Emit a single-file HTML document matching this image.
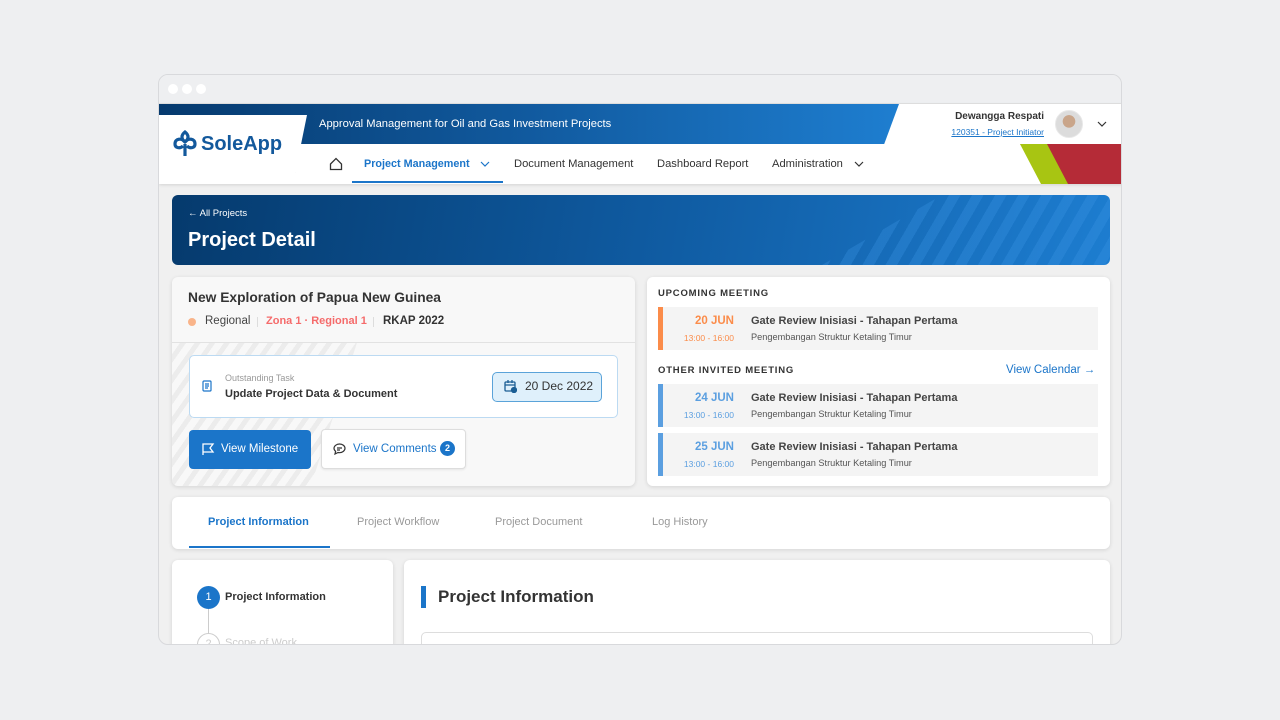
<!DOCTYPE html>
<html><head><meta charset="utf-8"><style>
*{box-sizing:border-box;margin:0;padding:0}
body{width:1280px;height:720px;background:#eeeff1;font-family:"Liberation Sans",sans-serif;position:relative;overflow:hidden;color:#333}
.abs{position:absolute}
.win{left:158px;top:74px;width:964px;height:571px;border:1px solid #d8d9dc;border-radius:10px;background:#f0f0f0;overflow:hidden}
.card{background:#fff;border-radius:6px;box-shadow:0 1px 4px rgba(0,0,0,.12)}
.nav{font-size:11.2px;color:#333}
</style></head><body>
<div class="abs win">
 <div class="abs" style="left:0;top:0;width:964px;height:29px;background:#eeeff1;border-bottom:1px solid #e2e2e2"></div>
 <div class="abs" style="left:9px;top:9px;width:10px;height:10px;border-radius:5px;background:#fff"></div>
 <div class="abs" style="left:23px;top:9px;width:10px;height:10px;border-radius:5px;background:#fff"></div>
 <div class="abs" style="left:37px;top:9px;width:10px;height:10px;border-radius:5px;background:#fff"></div>
 <!-- header -->
 <div class="abs" style="left:0;top:29px;width:964px;height:80px;background:#fff;box-shadow:0 1px 3px rgba(0,0,0,.12)"></div>
 <div class="abs" style="left:0;top:29px;width:740px;height:40px;background:linear-gradient(90deg,#063a6e,#115a9f 50%,#1e7ed0);clip-path:polygon(0 0,100% 0,98% 100%,0 100%);border-radius:0 0 6px 0"></div>
 <div class="abs" style="left:160px;top:43px;color:#fff;font-size:11.2px">Approval Management for Oil and Gas Investment Projects</div>
 <div class="abs" style="left:0;top:40px;width:148px;height:58px;background:#fff;clip-path:polygon(0 0,100% 0,92% 100%,0 100%);box-shadow:0 2px 4px rgba(0,0,0,.1)"></div>
 <svg class="abs" style="left:13px;top:55px" width="26" height="28" viewBox="0 0 26 28" fill="none" stroke="#13599c" stroke-width="3.2"><path d="M13 2c-4 3-4 7 0 10 4-3 4-7 0-10z"/><path d="M13 12c-3-4-10-4-10 2 0 4 5 5 8 2M13 12c3-4 10-4 10 2 0 4-5 5-8 2M13 14v12"/></svg>
 <div class="abs" style="left:42px;top:58px;font-size:20px;font-weight:bold;color:#13599c">SoleApp</div>
 <svg class="abs" style="left:170px;top:82px" width="14" height="14" viewBox="0 0 14 14" fill="none" stroke="#333" stroke-width="1.3"><path d="M1.5 7 7 1.5 12.5 7v5.5h-11z"/></svg>
 <div class="abs nav" style="left:205px;top:83px;font-weight:bold;color:#1b75c9;font-size:10.8px">Project Management</div>
 <svg class="abs" style="left:321px;top:86px" width="10" height="6" fill="none" stroke="#1b75c9" stroke-width="1.2"><path d="M1 1l4 4 4-4"/></svg>
 <div class="abs" style="left:193px;top:106px;width:151px;height:2px;background:#1b75c9"></div>
 <div class="abs nav" style="left:355px;top:83px">Document Management</div>
 <div class="abs nav" style="left:498px;top:83px">Dashboard Report</div>
 <div class="abs nav" style="left:613px;top:83px">Administration</div>
 <svg class="abs" style="left:695px;top:86px" width="10" height="6" fill="none" stroke="#333" stroke-width="1.2"><path d="M1 1l4 4 4-4"/></svg>
 <div class="abs" style="left:861px;top:69px;width:103px;height:40px;background:#b52b37;clip-path:polygon(0 0,100% 0,100% 100%,32% 100%)"></div>
 <div class="abs" style="left:861px;top:69px;width:60px;height:40px;background:#a8c512;clip-path:polygon(0 0,45% 0,80% 100%,35% 100%)"></div>
 <div class="abs" style="left:770px;top:36px;width:115px;text-align:right;font-size:10px;font-weight:bold;color:#333">Dewangga Respati</div>
 <div class="abs" style="left:770px;top:52px;width:115px;text-align:right;font-size:8.5px;color:#1b75c9;text-decoration:underline">120351 - Project Initiator</div>
 <div class="abs" style="left:896px;top:35px;width:28px;height:28px;border-radius:14px;background:radial-gradient(circle at 50% 40%,#c9a58a 30%,#dcdcdc 32%);border:1px solid #e8e8e8"></div>
 <svg class="abs" style="left:938px;top:46px" width="10" height="6" fill="none" stroke="#333" stroke-width="1.2"><path d="M1 1l4 4 4-4"/></svg>
 <!-- banner -->
 <div class="abs" style="left:13px;top:120px;width:938px;height:70px;border-radius:6px;background:linear-gradient(100deg,#053a6d,#0f5aa0 50%,#1d7dd0);overflow:hidden">
  <div class="abs" style="left:650px;top:0;width:300px;height:70px;background:repeating-linear-gradient(120deg,transparent 0 10px,rgba(60,150,230,.3) 10px 20px);clip-path:polygon(40% 0,100% 0,100% 100%,0 100%)"></div>
 </div>
 <div class="abs" style="left:29px;top:133px;font-size:9.5px;color:#fff">← All Projects</div>
 <div class="abs" style="left:29px;top:154px;font-size:20px;font-weight:bold;color:#fff">Project Detail</div>
 <!-- left card -->
 <div class="abs card" style="left:13px;top:202px;width:463px;height:209px;background:#f8f8f8"></div>
 <div class="abs" style="left:13px;top:267px;width:463px;height:144px;background:repeating-linear-gradient(125deg,transparent 0 7px,rgba(228,228,228,.6) 7px 12px);clip-path:polygon(0 0,40% 0,30% 100%,0 100%);border-radius:0 0 0 6px"></div>
 <div class="abs" style="left:13px;top:267px;width:463px;height:1px;background:#e2e2e2"></div>
 <div class="abs" style="left:29px;top:215px;font-size:13.8px;font-weight:bold;color:#333">New Exploration of Papua New Guinea</div>
 <div class="abs" style="left:29px;top:243px;width:8px;height:8px;border-radius:4px;background:#f9b48a"></div>
 <div class="abs" style="left:46px;top:240px;font-size:11.5px;color:#444">Regional</div>
 <div class="abs" style="left:98px;top:242px;width:1px;height:10px;background:#ddd"></div>
 <div class="abs" style="left:107px;top:240px;font-size:11px;font-weight:bold;color:#f56b6b">Zona 1 · Regional 1</div>
 <div class="abs" style="left:214px;top:242px;width:1px;height:10px;background:#ddd"></div>
 <div class="abs" style="left:224px;top:240px;font-size:11.5px;font-weight:bold;color:#333">RKAP 2022</div>
 <div class="abs" style="left:30px;top:280px;width:429px;height:63px;background:#fff;border:1px solid #bcdaf2;border-radius:5px"></div>
 <svg class="abs" style="left:43px;top:305px" width="10" height="12" fill="none" stroke="#1b75c9" stroke-width="1.2"><rect x="1" y="1" width="8" height="10" rx="1"/><path d="M3 4h4M3 6h4M3 8h3"/></svg>
 <div class="abs" style="left:66px;top:298px;font-size:9px;color:#999">Outstanding Task</div>
 <div class="abs" style="left:66px;top:313px;font-size:11px;font-weight:bold;color:#333">Update Project Data &amp; Document</div>
 <div class="abs" style="left:333px;top:297px;width:110px;height:30px;background:#dff0fb;border:1px solid #5aa3d9;border-radius:5px"></div>
 <svg class="abs" style="left:345px;top:305px" width="13" height="13" fill="none" stroke="#1b5e94" stroke-width="1.3"><rect x="1" y="2" width="10" height="9" rx="1"/><path d="M1 5h10M4 0v3M8 0v3"/><circle cx="10" cy="10" r="2.5" fill="#1b5e94"/></svg>
 <div class="abs" style="left:366px;top:304px;font-size:12px;color:#333">20 Dec 2022</div>
 <div class="abs" style="left:30px;top:355px;width:122px;height:39px;background:#1b75c9;border-radius:4px"></div>
 <svg class="abs" style="left:42px;top:367px" width="14" height="14" fill="none" stroke="#fff" stroke-width="1.3"><path d="M2 13V2h10l-3 4 3 4H2"/></svg>
 <div class="abs" style="left:62px;top:368px;font-size:11.5px;color:#fff">View Milestone</div>
 <div class="abs" style="left:162px;top:354px;width:145px;height:40px;background:#fff;border:1px solid #ddd;border-radius:4px;box-shadow:0 1px 2px rgba(0,0,0,.08)"></div>
 <svg class="abs" style="left:174px;top:368px" width="13" height="12" fill="none" stroke="#333" stroke-width="1.2"><path d="M6.5 1C3.5 1 1 3 1 5.3c0 1.2.6 2.2 1.6 3L2 11l3-1.5c.5.1 1 .2 1.5.2 3 0 5.5-2 5.5-4.4S9.5 1 6.5 1z"/><path d="M4 5h5M4 7h3"/></svg>
 <div class="abs" style="left:194px;top:368px;font-size:11.5px;color:#1b75c9">View Comments</div>
 <div class="abs" style="left:281px;top:366px;width:15px;height:15px;border-radius:8px;background:#1b75c9;color:#fff;font-size:9px;font-weight:bold;text-align:center;line-height:15px">2</div>
 <!-- right card -->
 <div class="abs card" style="left:488px;top:202px;width:463px;height:209px"></div>
 <div class="abs" style="left:499px;top:213px;font-size:9.5px;font-weight:bold;letter-spacing:.8px;color:#333">UPCOMING MEETING</div>
 <div class="abs" style="left:499px;top:232px;width:440px;height:43px;background:#f4f4f4;border-left:5px solid #fb8c4a"></div>
 <div class="abs" style="left:499px;top:240px;width:76px;text-align:right;font-size:11.5px;font-weight:bold;color:#fb8c4a">20 JUN</div>
 <div class="abs" style="left:499px;top:258px;width:76px;text-align:right;font-size:8.5px;color:#fb8c4a">13:00 - 16:00</div>
 <div class="abs" style="left:592px;top:240px;font-size:11px;font-weight:bold;color:#444">Gate Review Inisiasi - Tahapan Pertama</div>
 <div class="abs" style="left:592px;top:257px;font-size:9.2px;color:#555">Pengembangan Struktur Ketaling Timur</div>
 <div class="abs" style="left:499px;top:290px;font-size:9.5px;font-weight:bold;letter-spacing:.8px;color:#333">OTHER INVITED MEETING</div>
 <div class="abs" style="left:847px;top:289px;font-size:11.5px;color:#1b75c9">View Calendar →</div>
 <div class="abs" style="left:499px;top:309px;width:440px;height:43px;background:#f4f4f4;border-left:5px solid #5b9fe0"></div>
 <div class="abs" style="left:499px;top:317px;width:76px;text-align:right;font-size:11.5px;font-weight:bold;color:#5b9fe0">24 JUN</div>
 <div class="abs" style="left:499px;top:335px;width:76px;text-align:right;font-size:8.5px;color:#5b9fe0">13:00 - 16:00</div>
 <div class="abs" style="left:592px;top:317px;font-size:11px;font-weight:bold;color:#444">Gate Review Inisiasi - Tahapan Pertama</div>
 <div class="abs" style="left:592px;top:334px;font-size:9.2px;color:#555">Pengembangan Struktur Ketaling Timur</div>
 <div class="abs" style="left:499px;top:358px;width:440px;height:43px;background:#f4f4f4;border-left:5px solid #5b9fe0"></div>
 <div class="abs" style="left:499px;top:366px;width:76px;text-align:right;font-size:11.5px;font-weight:bold;color:#5b9fe0">25 JUN</div>
 <div class="abs" style="left:499px;top:384px;width:76px;text-align:right;font-size:8.5px;color:#5b9fe0">13:00 - 16:00</div>
 <div class="abs" style="left:592px;top:366px;font-size:11px;font-weight:bold;color:#444">Gate Review Inisiasi - Tahapan Pertama</div>
 <div class="abs" style="left:592px;top:383px;font-size:9.2px;color:#555">Pengembangan Struktur Ketaling Timur</div>
 <!-- tabs -->
 <div class="abs card" style="left:13px;top:422px;width:938px;height:52px"></div>
 <div class="abs" style="left:49px;top:441px;font-size:11px;font-weight:bold;color:#1b75c9">Project Information</div>
 <div class="abs" style="left:30px;top:471px;width:141px;height:2px;background:#1b75c9"></div>
 <div class="abs" style="left:198px;top:441px;font-size:11px;color:#999">Project Workflow</div>
 <div class="abs" style="left:336px;top:441px;font-size:11px;color:#999">Project Document</div>
 <div class="abs" style="left:493px;top:441px;font-size:11px;color:#999">Log History</div>
 <!-- bottom -->
 <div class="abs card" style="left:13px;top:485px;width:221px;height:100px"></div>
 <div class="abs" style="left:38px;top:511px;width:23px;height:23px;border-radius:12px;background:#1b75c9;color:#fff;font-size:11px;text-align:center;line-height:23px">1</div>
 <div class="abs" style="left:49px;top:534px;width:1px;height:24px;background:#ccc"></div>
 <div class="abs" style="left:38px;top:558px;width:23px;height:23px;border-radius:12px;border:1px solid #ccc;color:#ccc;font-size:11px;text-align:center;line-height:21px">2</div>
 <div class="abs" style="left:66px;top:516px;font-size:11px;font-weight:bold;color:#333">Project Information</div>
 <div class="abs" style="left:66px;top:562px;font-size:11px;color:#ccc">Scope of Work</div>
 <div class="abs card" style="left:245px;top:485px;width:706px;height:100px"></div>
 <div class="abs" style="left:262px;top:511px;width:5px;height:22px;background:#1b75c9"></div>
 <div class="abs" style="left:279px;top:512px;font-size:17px;font-weight:bold;color:#333">Project Information</div>
 <div class="abs" style="left:262px;top:557px;width:672px;height:30px;border:1px solid #ddd;border-radius:5px"></div>
</div>
</body></html>
